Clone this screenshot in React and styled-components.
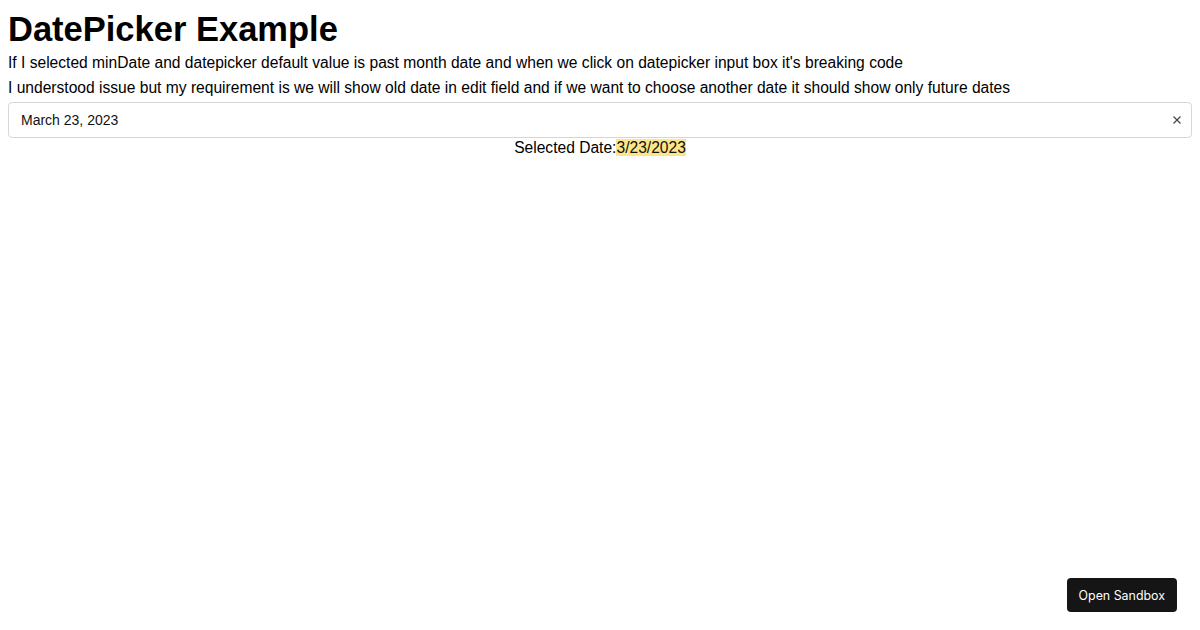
import styled, { createGlobalStyle } from 'styled-components';

const GlobalStyle = createGlobalStyle`
  body {
    margin: 8px;
    font-family: 'Liberation Sans', Arial, sans-serif;
    color: #000;
    background: #fff;
  }
`;

const Title = styled.h1`
  font-size: 34.5px;
  font-weight: bold;
  margin: 0;
  line-height: 42px;
`;

const Note = styled.p`
  font-size: 15.6px;
  margin: 0;
  line-height: 25px;
`;

const InputWrap = styled.div`
  margin-top: 2px;
  height: 36px;
  border: 1px solid #d3d6da;
  border-radius: 4px;
  display: flex;
  align-items: center;
  padding: 0 12px;
  box-sizing: border-box;
  > input {
    flex: 1;
    border: none;
    outline: none;
    font-family: 'Liberation Sans', Arial, sans-serif;
    font-size: 14px;
    color: #111;
    padding: 0;
    background: transparent;
  }
`;

const ClearBtn = styled.button`
  border: none;
  background: none;
  padding: 0;
  width: 12px;
  height: 12px;
  display: grid;
  place-items: center;
  cursor: pointer;
  margin-right: -4px;
`;

const Result = styled.div`
  text-align: center;
  font-size: 15.6px;
  line-height: 20px;
  > mark {
    background: #fde68a;
    color: #111;
  }
`;

const SandboxBtn = styled.a`
  position: fixed;
  right: 23px;
  bottom: 18px;
  height: 34px;
  padding: 0 12px;
  display: flex;
  align-items: center;
  background: #151515;
  color: #fff;
  border-radius: 4px;
  font-family: Inter, 'Liberation Sans', sans-serif;
  font-size: 12.4px;
  text-decoration: none;
`;

function App() {
  return (
    <>
      <GlobalStyle />
      <Title>DatePicker Example</Title>
      <Note>
        If I selected minDate and datepicker default value is past month date and
        when we click on datepicker input box it's breaking code
      </Note>
      <Note>
        I understood issue but my requirement is we will show old date in edit
        field and if we want to choose another date it should show only future
        dates
      </Note>
      <InputWrap>
        <input readOnly value='March 23, 2023' />
        <ClearBtn aria-label='clear'>
          <svg width='10' height='10' viewBox='0 0 10 10'>
            <path d='M1.5 1.5 L8.5 8.5 M8.5 1.5 L1.5 8.5' stroke='#444' strokeWidth='1.2' />
          </svg>
        </ClearBtn>
      </InputWrap>
      <Result>
        Selected Date:<mark>3/23/2023</mark>
      </Result>
      <SandboxBtn href='#'>Open Sandbox</SandboxBtn>
    </>
  );
}

export default App;
